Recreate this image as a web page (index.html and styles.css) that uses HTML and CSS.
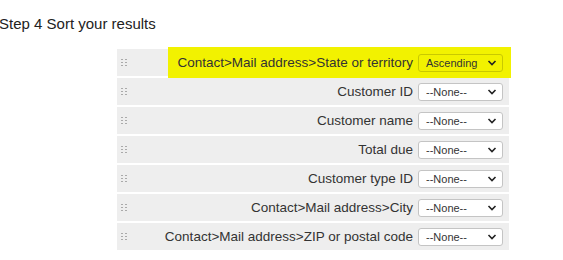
FILE: index.html
```html
<!DOCTYPE html>
<html lang="en">
<head>
<meta charset="UTF-8">
<meta name="viewport" content="width=device-width, initial-scale=1.0">
<title>Sort your results</title>
<link rel="stylesheet" href="styles.css">
</head>
<body>
<div class="page">
  <h3 class="step-title">Step 4 Sort your results</h3>
  <div class="sort-list">
    <div class="sort-row">
      <span class="handle"></span>
      <div class="highlight">
        <span class="sort-label">Contact&gt;Mail address&gt;State or territory</span>
        <span class="select-wrap">
          <select class="sort-select"><option>Ascending</option><option>Descending</option><option>--None--</option></select>
          <svg class="chevron" width="10" height="6" viewBox="0 0 10 6"><path d="M1.5 1 L5 4.5 L8.5 1" fill="none" stroke="#222" stroke-width="1.6"/></svg>
        </span>
      </div>
    </div>
    <div class="sort-row">
      <span class="handle"></span>
      <span class="sort-label">Customer ID</span>
      <span class="select-wrap">
        <select class="sort-select"><option>--None--</option><option>Ascending</option><option>Descending</option></select>
        <svg class="chevron" width="10" height="6" viewBox="0 0 10 6"><path d="M1.5 1 L5 4.5 L8.5 1" fill="none" stroke="#222" stroke-width="1.6"/></svg>
      </span>
    </div>
    <div class="sort-row">
      <span class="handle"></span>
      <span class="sort-label">Customer name</span>
      <span class="select-wrap">
        <select class="sort-select"><option>--None--</option><option>Ascending</option><option>Descending</option></select>
        <svg class="chevron" width="10" height="6" viewBox="0 0 10 6"><path d="M1.5 1 L5 4.5 L8.5 1" fill="none" stroke="#222" stroke-width="1.6"/></svg>
      </span>
    </div>
    <div class="sort-row">
      <span class="handle"></span>
      <span class="sort-label">Total due</span>
      <span class="select-wrap">
        <select class="sort-select"><option>--None--</option><option>Ascending</option><option>Descending</option></select>
        <svg class="chevron" width="10" height="6" viewBox="0 0 10 6"><path d="M1.5 1 L5 4.5 L8.5 1" fill="none" stroke="#222" stroke-width="1.6"/></svg>
      </span>
    </div>
    <div class="sort-row">
      <span class="handle"></span>
      <span class="sort-label">Customer type ID</span>
      <span class="select-wrap">
        <select class="sort-select"><option>--None--</option><option>Ascending</option><option>Descending</option></select>
        <svg class="chevron" width="10" height="6" viewBox="0 0 10 6"><path d="M1.5 1 L5 4.5 L8.5 1" fill="none" stroke="#222" stroke-width="1.6"/></svg>
      </span>
    </div>
    <div class="sort-row">
      <span class="handle"></span>
      <span class="sort-label">Contact&gt;Mail address&gt;City</span>
      <span class="select-wrap">
        <select class="sort-select"><option>--None--</option><option>Ascending</option><option>Descending</option></select>
        <svg class="chevron" width="10" height="6" viewBox="0 0 10 6"><path d="M1.5 1 L5 4.5 L8.5 1" fill="none" stroke="#222" stroke-width="1.6"/></svg>
      </span>
    </div>
    <div class="sort-row">
      <span class="handle"></span>
      <span class="sort-label">Contact&gt;Mail address&gt;ZIP or postal code</span>
      <span class="select-wrap">
        <select class="sort-select"><option>--None--</option><option>Ascending</option><option>Descending</option></select>
        <svg class="chevron" width="10" height="6" viewBox="0 0 10 6"><path d="M1.5 1 L5 4.5 L8.5 1" fill="none" stroke="#222" stroke-width="1.6"/></svg>
      </span>
    </div>
  </div>
</div>
</body>
</html>
```

FILE: styles.css
```css
body {
  font-family: "Liberation Sans", Arial, sans-serif;
  margin: 0;
  padding: 0;
  background: #fff;
  color: #333;
}

.page {
  padding-top: 15px;
}

.step-title {
  font-size: 15px;
  font-weight: normal;
  color: #222;
  margin: 0 0 16px -1px;
  line-height: 18px;
}

.sort-list {
  margin-left: 117px;
  width: 392px;
}

.sort-row {
  display: flex;
  align-items: center;
  height: 27px;
  background-color: #eeeeee;
  margin-bottom: 2px;
}

.handle {
  width: 7px;
  height: 9px;
  margin-left: 3px;
  background-image: radial-gradient(circle, #aaa 0.9px, transparent 1.1px);
  background-size: 4px 3px;
}

.sort-label {
  flex: 1;
  text-align: right;
  font-size: 13.5px;
  color: #333;
  margin-right: 5px;
}

.highlight {
  flex: 1;
  display: flex;
  align-items: center;
  align-self: stretch;
  background-color: #f2f200;
  margin: -2px -2px -2px 41px;
  padding-right: 8px;
}

.select-wrap {
  position: relative;
  display: inline-block;
  margin-right: 6px;
}

.highlight .select-wrap {
  margin-right: 0;
}

.sort-select {
  appearance: none;
  -webkit-appearance: none;
  width: 85px;
  height: 18px;
  padding: 0 0 0 7px;
  border: 1px solid #c4c4c4;
  border-radius: 3px;
  background-color: #fff;
  font-family: "Liberation Sans", Arial, sans-serif;
  font-size: 11px;
  color: #333;
  display: block;
}

.highlight .sort-select {
  background-color: transparent;
  border-color: #c9c900;
}

.chevron {
  position: absolute;
  right: 6px;
  top: 6px;
  pointer-events: none;
}
```
